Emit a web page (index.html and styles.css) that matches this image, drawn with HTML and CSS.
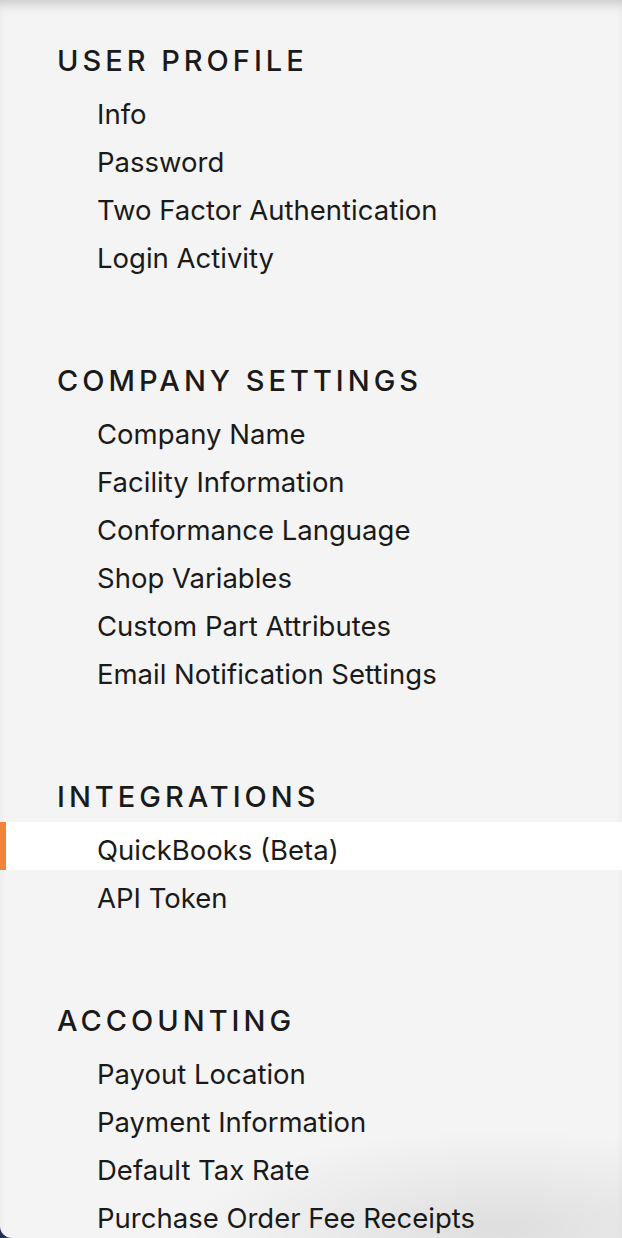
FILE: index.html
```html
<!DOCTYPE html>
<html lang="en">
<head>
  <meta charset="UTF-8">
  <meta name="viewport" content="width=device-width, initial-scale=1.0">
  <title>Settings</title>
  <link rel="stylesheet" href="styles.css">
</head>
<body>
  <nav class="settings-nav">
    <section class="nav-section">
      <h2>User Profile</h2>
      <ul>
        <li><a href="#">Info</a></li>
        <li><a href="#">Password</a></li>
        <li><a href="#">Two Factor Authentication</a></li>
        <li><a href="#">Login Activity</a></li>
      </ul>
    </section>

    <section class="nav-section">
      <h2>Company Settings</h2>
      <ul>
        <li><a href="#">Company Name</a></li>
        <li><a href="#">Facility Information</a></li>
        <li><a href="#">Conformance Language</a></li>
        <li><a href="#">Shop Variables</a></li>
        <li><a href="#">Custom Part Attributes</a></li>
        <li><a href="#">Email Notification Settings</a></li>
      </ul>
    </section>

    <section class="nav-section">
      <h2>Integrations</h2>
      <ul>
        <li class="active"><a href="#">QuickBooks (Beta)</a></li>
        <li><a href="#">API Token</a></li>
      </ul>
    </section>

    <section class="nav-section">
      <h2>Accounting</h2>
      <ul>
        <li><a href="#">Payout Location</a></li>
        <li><a href="#">Payment Information</a></li>
        <li><a href="#">Default Tax Rate</a></li>
        <li><a href="#">Purchase Order Fee Receipts</a></li>
      </ul>
    </section>
  </nav>
</body>
</html>
```

FILE: styles.css
```css
:root {
  --navy: #1c3357;
  --panel: #f4f4f4;
  --text: #1a1a1a;
  --orange: #f0843a;
}

html, body {
  margin: 0;
  padding: 0;
  height: 100%;
}

body {
  background-color: var(--navy);
  font-family: "Inter", "Noto Sans", sans-serif;
  color: var(--text);
  overflow: hidden;
}

.settings-nav {
  position: relative;
  height: 100vh;
  background-color: var(--panel);
  border-bottom-left-radius: 12px;
  box-shadow: inset 0 10px 12px -6px rgba(0, 0, 0, 0.18);
  padding-top: 41px;
  box-sizing: border-box;
  overflow: hidden;
}

/* soft shadow cast along the lower right edge */
.settings-nav::after {
  content: "";
  position: absolute;
  right: -200px;
  bottom: -90px;
  width: 640px;
  height: 200px;
  background: radial-gradient(ellipse at center, rgba(0, 0, 0, 0.09) 0%, rgba(0, 0, 0, 0.03) 45%, rgba(0, 0, 0, 0) 70%);
  pointer-events: none;
}

.nav-section + .nav-section {
  margin-top: 83px;
}

.nav-section h2 {
  margin: 0 0 5px 57px;
  font-size: 29px;
  line-height: 40px;
  font-weight: 500;
  letter-spacing: 4px;
  text-transform: uppercase;
}

.nav-section ul {
  list-style: none;
  margin: 0;
  padding: 0;
}

.nav-section li {
  position: relative;
  height: 48px;
}

.nav-section li a {
  display: block;
  padding: 8px 0 0 97px;
  line-height: 41px;
  font-size: 27.5px;
  color: var(--text);
  text-decoration: none;
}

.nav-section li.active {
  background-color: #ffffff;
}

.nav-section li.active::before {
  content: "";
  position: absolute;
  left: 0;
  top: 0;
  bottom: 0;
  width: 6px;
  background-color: var(--orange);
}
```
